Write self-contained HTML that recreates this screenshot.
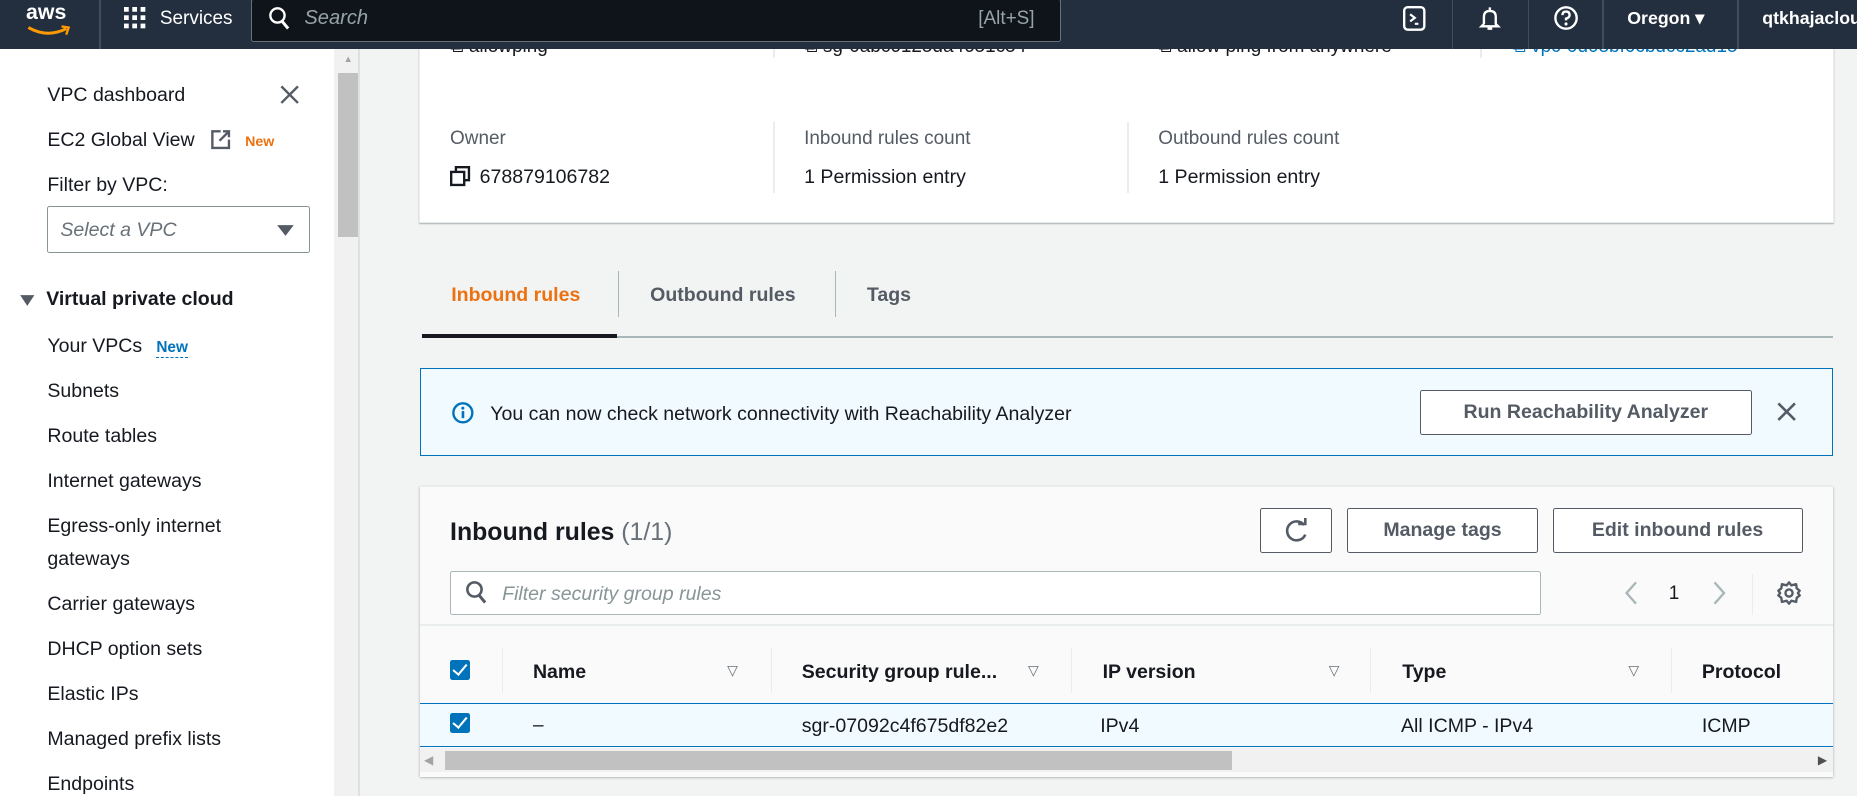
<!DOCTYPE html>
<html><head><meta charset="utf-8">
<style>
html,body{margin:0;padding:0;width:1857px;height:796px;overflow:hidden;background:#f2f3f3}
#w{zoom:1.18431;width:1568px;height:672px;position:relative;font-family:"Liberation Sans",Arial,sans-serif;color:#16191f;font-size:16px;overflow:hidden}
.a{position:absolute;white-space:nowrap}
.nav{position:absolute;left:0;top:0;width:1568px;height:41px;background:#232f3e;color:#fff;z-index:10}
.side{position:absolute;left:0;top:41px;width:282px;height:631px;background:#fff}
.si{position:absolute;left:40px;font-size:16.5px;color:#16191f}
.b{font-weight:bold}
.btn{position:absolute;border:1px solid #545b64;border-radius:2px;background:#fff;font-weight:bold;color:#545b64;font-size:16.5px;text-align:center;box-sizing:border-box}
.lbl{color:#545b64;font-size:16px}
.cb{position:absolute;width:17px;height:17px;background:#0073bb;border-radius:2px}
.cb:after{content:"";position:absolute;left:5px;top:1px;width:5px;height:10px;border:solid #fff;border-width:0 2px 2px 0;transform:rotate(40deg)}
.th{position:absolute;top:558px;font-weight:bold;color:#16191f;font-size:16.5px}
.tri{position:absolute;top:560px;color:#687078;font-size:12px}
.sep{position:absolute;width:1px;background:#eaeded}
</style></head><body><div id="w">
<div class="nav">
 <div class="a" style="left:22px;top:0px;font-size:18px;font-weight:bold">aws</div>
 <svg class="a" style="left:22px;top:20px" width="40" height="12"><path d="M2 3 Q18 12 34 4" stroke="#ff9900" stroke-width="2.5" fill="none"/><path d="M30 2 L36 3 L34 9" stroke="#ff9900" stroke-width="2" fill="none"/></svg>
 <div class="a" style="left:84px;top:0;width:1px;height:41px;background:#414d5c"></div>
 <svg class="a" style="left:105px;top:6px" width="20" height="20"><g fill="#fff"><rect x="0" y="0" width="4" height="4"/><rect x="7" y="0" width="4" height="4"/><rect x="14" y="0" width="4" height="4"/><rect x="0" y="7" width="4" height="4"/><rect x="7" y="7" width="4" height="4"/><rect x="14" y="7" width="4" height="4"/><rect x="0" y="14" width="4" height="4"/><rect x="7" y="14" width="4" height="4"/><rect x="14" y="14" width="4" height="4"/></g></svg>
 <div class="a" style="left:135px;top:7px;font-size:16px">Services</div>
 <div class="a" style="left:212px;top:-1px;width:682px;height:35px;background:#0f141a;border:1px solid #687078;border-radius:2px"></div>
 <svg class="a" style="left:226px;top:5px" width="20" height="22"><circle cx="8" cy="8" r="6" stroke="#fff" stroke-width="2" fill="none"/><path d="M12 13 L17 19" stroke="#fff" stroke-width="2.5"/></svg>
 <div class="a" style="left:257px;top:6px;font-style:italic;color:#95a5a6;font-size:17px">Search</div>
 <div class="a" style="left:826px;top:7px;color:#95a5a6;font-size:16px">[Alt+S]</div>
 <svg class="a" style="left:1185px;top:5px" width="20" height="22"><rect x="1" y="1" width="17" height="19" rx="3" stroke="#fff" stroke-width="2" fill="none"/><path d="M6 7 L10 10 L6 13 M10 15 H13" stroke="#fff" stroke-width="1.8" fill="none"/></svg>
 <div class="a" style="left:1226px;top:0;width:1px;height:41px;background:#414d5c"></div>
 <svg class="a" style="left:1248px;top:4px" width="20" height="24"><path d="M10 2 V4 M5 16 V10 Q5 5 10 5 Q15 5 15 10 V16 L17 18 H3 L5 16 M8 20 H12" stroke="#fff" stroke-width="2" fill="none"/></svg>
 <div class="a" style="left:1290px;top:0;width:1px;height:41px;background:#414d5c"></div>
 <svg class="a" style="left:1311px;top:4px" width="22" height="22"><circle cx="11" cy="11" r="9" stroke="#fff" stroke-width="2" fill="none"/><path d="M8 8.5 Q8 5.5 11 5.5 Q14 5.5 14 8.5 Q14 10.5 11 11.5 V13" stroke="#fff" stroke-width="2" fill="none"/><circle cx="11" cy="16" r="1.3" fill="#fff"/></svg>
 <div class="a" style="left:1353px;top:0;width:1px;height:41px;background:#414d5c"></div>
 <div class="a" style="left:1374px;top:7px;font-size:15px;font-weight:bold">Oregon ▾</div>
 <div class="a" style="left:1467px;top:0;width:1px;height:41px;background:#414d5c"></div>
 <div class="a" style="left:1488px;top:7px;font-size:15px;font-weight:bold">qtkhajaclou</div>
</div>

<div class="side">
 <div class="si" style="top:30px">VPC dashboard</div>
 <svg class="a" style="left:236px;top:30px" width="18" height="18"><path d="M2 2 L16 16 M16 2 L2 16" stroke="#545b64" stroke-width="2"/></svg>
 <div class="si" style="top:68px">EC2 Global View</div>
 <svg class="a" style="left:177px;top:68px" width="18" height="18"><path d="M9 2 H2 V16 H16 V9" stroke="#545b64" stroke-width="2" fill="none"/><path d="M8 10 L16 2 M11 2 H16 V7" stroke="#545b64" stroke-width="2" fill="none"/></svg>
 <div class="a" style="left:207px;top:72px;font-size:12px;color:#ec7211;font-weight:bold">New</div>
 <div class="si" style="top:106px">Filter by VPC:</div>
 <div class="a" style="left:40px;top:133px;width:222px;height:40px;border:1px solid #879596;border-radius:2px;box-sizing:border-box"></div>
 <div class="a" style="left:51px;top:144px;font-style:italic;color:#687078;font-size:16.5px">Select a VPC</div>
 <svg class="a" style="left:233px;top:148px" width="16" height="12"><path d="M1 1 H15 L8 10 Z" fill="#545b64"/></svg>
 <svg class="a" style="left:16px;top:207px" width="14" height="11"><path d="M1 1 H13 L7 10 Z" fill="#545b64"/></svg>
 <div class="si b" style="top:202px;left:39px">Virtual private cloud</div>
 <div class="si" style="top:242px">Your VPCs</div>
 <div class="a" style="left:132px;top:245px;font-size:13px;color:#0073bb;font-weight:bold;border-bottom:1px dashed #0073bb">New</div>
 <div class="si" style="top:280px">Subnets</div>
 <div class="si" style="top:318px">Route tables</div>
 <div class="si" style="top:356px">Internet gateways</div>
 <div class="si" style="top:394px">Egress-only internet</div>
 <div class="si" style="top:422px">gateways</div>
 <div class="si" style="top:460px">Carrier gateways</div>
 <div class="si" style="top:498px">DHCP option sets</div>
 <div class="si" style="top:536px">Elastic IPs</div>
 <div class="si" style="top:574px">Managed prefix lists</div>
 <div class="si" style="top:612px">Endpoints</div>
</div>
<div class="a" style="left:282px;top:41px;width:20px;height:631px;background:#f1f1f1"></div>
<div class="a" style="left:285px;top:62px;width:17px;height:138px;background:#c1c1c1"></div>
<div class="a" style="left:290px;top:46px;color:#a3a3a3;font-size:8px">▲</div>
<div class="a" style="left:302px;top:41px;width:2px;height:631px;background:#dfe1e1"></div>

<!-- top card -->
<div class="a" style="left:354px;top:20px;width:1193px;height:167px;background:#fff;border:1px solid #eaeded;box-shadow:0 1px 1px rgba(0,28,36,.3)"></div>
<div class="a" style="left:380px;top:30px;color:#16191f">⧉ allowping</div>
<div class="a" style="left:679px;top:30px;color:#16191f">⧉ sg-0abc6125da4651c54</div>
<div class="a" style="left:978px;top:30px;color:#16191f">⧉ allow ping from anywhere</div>
<div class="a" style="left:1277px;top:30px;color:#0073bb">⧉ vpc-0d08bf0cbdcc2ad15</div>
<div class="sep" style="left:653px;top:41px;height:8px"></div>
<div class="sep" style="left:1250px;top:41px;height:8px"></div>
<div class="sep" style="left:653px;top:103px;height:60px"></div>
<div class="sep" style="left:952px;top:103px;height:60px"></div>
<div class="a lbl" style="left:380px;top:108px">Owner</div>
<div class="a lbl" style="left:679px;top:108px">Inbound rules count</div>
<div class="a lbl" style="left:978px;top:108px">Outbound rules count</div>
<svg class="a" style="left:380px;top:140px" width="18" height="18"><rect x="5" y="1" width="11" height="11" stroke="#16191f" stroke-width="2" fill="none"/><rect x="1" y="5" width="11" height="11" stroke="#16191f" stroke-width="2" fill="#fff"/></svg>
<div class="a" style="left:405px;top:140px;font-size:16.5px">678879106782</div>
<div class="a" style="left:679px;top:140px;font-size:16.5px">1 Permission entry</div>
<div class="a" style="left:978px;top:140px;font-size:16.5px">1 Permission entry</div>

<!-- tabs -->
<div class="a b" style="left:381px;top:240px;color:#ec7211;font-size:16.5px">Inbound rules</div>
<div class="a" style="left:522px;top:229px;width:1px;height:39px;background:#aab7b8"></div>
<div class="a b" style="left:549px;top:240px;color:#545b64;font-size:16.5px">Outbound rules</div>
<div class="a" style="left:705px;top:229px;width:1px;height:39px;background:#aab7b8"></div>
<div class="a b" style="left:732px;top:240px;color:#545b64;font-size:16.5px">Tags</div>
<div class="a" style="left:356px;top:284px;width:1192px;height:1px;background:#aab7b8"></div>
<div class="a" style="left:356px;top:282px;width:165px;height:3px;background:#16191f"></div>

<!-- alert -->
<div class="a" style="left:355px;top:311px;width:1191px;height:72px;background:#f1faff;border:1px solid #0073bb"></div>
<svg class="a" style="left:381px;top:339px" width="20" height="20"><circle cx="10" cy="10" r="8" stroke="#0073bb" stroke-width="2" fill="none"/><rect x="9" y="8.5" width="2.2" height="6" fill="#0073bb"/><circle cx="10" cy="6" r="1.3" fill="#0073bb"/></svg>
<div class="a" style="left:414px;top:340px;font-size:16.5px">You can now check network connectivity with Reachability Analyzer</div>
<div class="btn" style="left:1199px;top:329px;width:280px;height:38px;line-height:37px">Run Reachability Analyzer</div>
<svg class="a" style="left:1500px;top:339px" width="18" height="18"><path d="M2 2 L16 16 M16 2 L2 16" stroke="#545b64" stroke-width="2.2"/></svg>

<!-- table -->
<div class="a" style="left:355px;top:410px;width:1193px;height:245px;background:#fafafa;box-shadow:0 1px 2px rgba(0,28,36,.35);border-top:1px solid #eaeded"></div>
<div class="a" style="left:380px;top:437px;font-size:21px;font-weight:bold">Inbound rules <span style="font-weight:normal;color:#687078">(1/1)</span></div>
<div class="btn" style="left:1064px;top:429px;width:61px;height:38px"></div>
<svg class="a" style="left:1084px;top:437px" width="22" height="22"><path d="M17 6 A8 8 0 1 0 18 14" stroke="#545b64" stroke-width="2.2" fill="none"/><path d="M12 5 H18 V0" stroke="#545b64" stroke-width="2.2" fill="none"/></svg>
<div class="btn" style="left:1137px;top:429px;width:162px;height:38px;line-height:37px">Manage tags</div>
<div class="btn" style="left:1311px;top:429px;width:211px;height:38px;line-height:37px">Edit inbound rules</div>
<div class="a" style="left:380px;top:482px;width:921px;height:37px;background:#fff;border:1px solid #aab7b8;border-radius:2px;box-sizing:border-box"></div>
<svg class="a" style="left:393px;top:490px" width="20" height="22"><circle cx="8" cy="8" r="6" stroke="#545b64" stroke-width="2.2" fill="none"/><path d="M12 13 L17 19" stroke="#545b64" stroke-width="2.5"/></svg>
<div class="a" style="left:424px;top:492px;font-style:italic;color:#879596;font-size:16.5px">Filter security group rules</div>
<svg class="a" style="left:1370px;top:490px" width="14" height="22"><path d="M11 2 L3 11 L11 20" stroke="#aab7b8" stroke-width="2" fill="none"/></svg>
<div class="a" style="left:1409px;top:492px">1</div>
<svg class="a" style="left:1445px;top:490px" width="14" height="22"><path d="M3 2 L11 11 L3 20" stroke="#aab7b8" stroke-width="2" fill="none"/></svg>
<div class="a" style="left:1479px;top:485px;width:1px;height:34px;background:#eaeded"></div>
<svg class="a" style="left:1500px;top:490px" width="22" height="22"><circle cx="11" cy="11" r="3" stroke="#545b64" stroke-width="2" fill="none"/><path d="M11 2 L13 4.5 L17 3.5 L17.5 7 L20 9 L18.5 11 L20 13 L17.5 15 L17 18.5 L13 17.5 L11 20 L9 17.5 L5 18.5 L4.5 15 L2 13 L3.5 11 L2 9 L4.5 7 L5 3.5 L9 4.5 Z" stroke="#545b64" stroke-width="2" fill="none" stroke-linejoin="round"/></svg>
<div class="a" style="left:355px;top:527px;width:1193px;height:2px;background:#eaeded"></div>
<div class="cb" style="left:380px;top:557px"></div>
<div class="sep" style="left:424px;top:547px;height:38px"></div>
<div class="th" style="left:450px">Name</div><div class="tri" style="left:614px">▽</div>
<div class="sep" style="left:651px;top:547px;height:38px"></div>
<div class="th" style="left:677px">Security group rule...</div><div class="tri" style="left:868px">▽</div>
<div class="sep" style="left:904px;top:547px;height:38px"></div>
<div class="th" style="left:931px">IP version</div><div class="tri" style="left:1122px">▽</div>
<div class="sep" style="left:1157px;top:547px;height:38px"></div>
<div class="th" style="left:1184px">Type</div><div class="tri" style="left:1375px">▽</div>
<div class="sep" style="left:1411px;top:547px;height:38px"></div>
<div class="th" style="left:1437px">Protocol</div>
<div class="a" style="left:355px;top:594px;width:1193px;height:35px;background:#f1faff;border-top:1px solid #0073bb;border-bottom:1px solid #0073bb"></div>
<div class="cb" style="left:380px;top:602px"></div>
<div class="a" style="left:450px;top:604px">–</div>
<div class="a" style="left:677px;top:604px;font-size:16.5px">sgr-07092c4f675df82e2</div>
<div class="a" style="left:929px;top:604px;font-size:16.5px">IPv4</div>
<div class="a" style="left:1183px;top:604px;font-size:16.5px">All ICMP - IPv4</div>
<div class="a" style="left:1437px;top:604px;font-size:16.5px">ICMP</div>
<div class="a" style="left:355px;top:632px;width:1193px;height:20px;background:#f1f1f1"></div>
<div class="a" style="left:376px;top:634px;width:664px;height:16px;background:#c1c1c1"></div>
<div class="a" style="left:358px;top:636px;color:#a3a3a3;font-size:10px">◀</div>
<div class="a" style="left:1535px;top:636px;color:#505050;font-size:10px">▶</div>
</div></body></html>
